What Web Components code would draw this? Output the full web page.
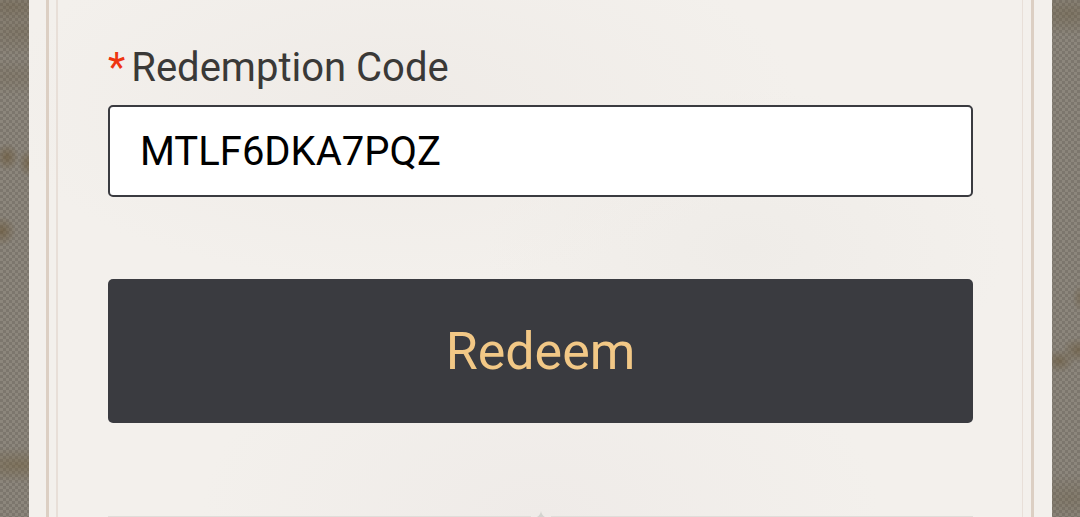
<!DOCTYPE html>
<html lang="en">
<head>
<meta charset="utf-8">
<meta name="viewport" content="width=device-width, initial-scale=1">
<title>Redeem Code</title>
<style>
  :root {
    --font-family: Roboto, "Liberation Sans", sans-serif;
    --ink: #3a3b40;
    --gold: #f2c886;
    --danger: #ee3510;
    --paper: #f3f0ec;
    --radius: 5px;
  }

  body {
    margin: 0;
    font-family: var(--font-family);
    background: #847d73;
  }
</style>
</head>
<body>
<redeem-page>
  <redeem-panel>
    <redeem-form>
      <redeem-input name="code" value="MTLF6DKA7PQZ" required>Redemption Code</redeem-input>
      <redeem-button>Redeem</redeem-button>
    </redeem-form>
    <panel-divider></panel-divider>
  </redeem-panel>
</redeem-page>

<script>
class RedeemPage extends HTMLElement {
  constructor() {
    super();
    this.attachShadow({ mode: 'open' });
    this.shadowRoot.innerHTML = `
      <style>
        :host {
          display: flex;
          box-sizing: border-box;
          min-height: 100vh;
          padding: 0 28px 0 29px;
          overflow: hidden;
          background:
            radial-gradient(ellipse 12px 14px at 7px 157px, #66512f90, transparent),
            radial-gradient(ellipse 10px 14px at 28px 163px, #66512f80, transparent),
            radial-gradient(ellipse 14px 15px at 2px 231px, #66512f90, transparent),
            radial-gradient(ellipse 60px 16px at 12px 6px, #66563a60, transparent),
            radial-gradient(ellipse 60px 26px at 20px 32px, #66563a48, transparent),
            radial-gradient(ellipse 60px 20px at 14px 76px, #66563a38, transparent),
            radial-gradient(ellipse 60px 18px at 18px 465px, #6d5b3870, transparent),
            radial-gradient(ellipse 50px 22px at calc(100% - 12px) 14px, #66583c60, transparent),
            radial-gradient(ellipse 16px 12px at calc(100% - 21px) 361px, #66543588, transparent),
            radial-gradient(ellipse 16px 13px at calc(100% - 2px) 350px, #66543588, transparent),
            radial-gradient(ellipse 8px 14px at 100% 298px, #66543560, transparent),
            radial-gradient(ellipse 50px 24px at calc(100% - 10px) 498px, #66583c48, transparent),
            conic-gradient(#7c766d 25%, #8c867c 0 50%, #7c766d 0 75%, #8c867c 0) 0 0 / 6px 6px;
        }
      </style>
      <slot></slot>`;
  }
}

class RedeemPanel extends HTMLElement {
  constructor() {
    super();
    this.attachShadow({ mode: 'open' });
    this.shadowRoot.innerHTML = `
      <style>
        :host {
          display: flex;
          flex: 1;
          min-width: 0;
          box-sizing: border-box;
          padding: 0 18px 0 17px;
          background:
            radial-gradient(ellipse 340px 200px at 50% 100%, #efebe8, #efebe800),
            radial-gradient(ellipse 400px 180px at 36% 20%, #efebe7, #efebe700),
            radial-gradient(ellipse 260px 160px at 70% 48%, #efece8, #efece800),
            var(--paper);
        }

        .frame {
          display: flex;
          flex: 1;
          min-width: 0;
          padding: 0 8px 0 7px;
          border: solid #dccfc3;
          border-width: 0 3px;
        }

        .content {
          display: flex;
          flex: 1;
          flex-direction: column;
          min-width: 0;
          padding: 44px 49px 0 50px;
          border: solid #e8dfd8;
          border-width: 0 1px 0 2px;
        }
      </style>
      <div class="frame">
        <div class="content"><slot></slot></div>
      </div>`;
  }
}

class RedeemForm extends HTMLElement {
  constructor() {
    super();
    this.attachShadow({ mode: 'open' });
    this.shadowRoot.innerHTML = `
      <style>
        :host {
          display: flex;
          flex-direction: column;
          gap: 82px;
        }
      </style>
      <slot></slot>`;
  }
}

class RedeemInput extends HTMLElement {
  static formAssociated = true;

  constructor() {
    super();
    this.attachShadow({ mode: 'open' });
    this._internals = this.attachInternals();
    this.render();
  }

  connectedCallback() {
    this.input = this.shadowRoot.querySelector('input');

    ['name', 'value', 'placeholder', 'required'].forEach((attr) => {
      const value = this.getAttribute(attr);
      if (value !== null) {
        this.input.setAttribute(attr, value);
      }
    });

    this._internals.setFormValue(this.input.value);

    this.input.addEventListener('input', () => {
      this._internals.setFormValue(this.input.value);
    });
  }

  render() {
    this.shadowRoot.innerHTML = `
      <style>
        :host {
          display: flex;
          flex-direction: column;
          gap: 14px;
          font-size: 40px;
        }

        label {
          display: flex;
          gap: 6px;
          line-height: 47px;
          color: #3a3937;
        }

        .mark {
          display: none;
          color: var(--danger);
        }

        :host([required]) .mark {
          display: inline;
        }

        input {
          box-sizing: border-box;
          width: 100%;
          height: 92px;
          padding: 0 30px;
          border: 2px solid var(--ink);
          border-radius: var(--radius);
          background: #fff;
          color: #000;
          font: inherit;
        }

        input:focus-visible {
          outline: 2px solid var(--gold);
        }
      </style>
      <label for="field"><span class="mark">*</span><span><slot></slot></span></label>
      <input id="field" type="text" autocomplete="off" spellcheck="false">`;
  }

  get value() {
    return this.input?.value || '';
  }
}

class RedeemButton extends HTMLElement {
  constructor() {
    super();
    this.attachShadow({ mode: 'open' });
    this.shadowRoot.innerHTML = `
      <style>
        :host {
          display: block;
        }

        button {
          display: block;
          width: 100%;
          padding: 43px 24px 41px;
          border: 0;
          border-radius: var(--radius);
          background: var(--ink);
          color: var(--gold);
          font-family: inherit;
          font-size: 52px;
          line-height: 60px;
          cursor: pointer;
        }
      </style>
      <button type="button"><slot></slot></button>`;
  }
}

class PanelDivider extends HTMLElement {
  constructor() {
    super();
    this.attachShadow({ mode: 'open' });
    this.shadowRoot.innerHTML = `
      <style>
        :host {
          display: flex;
          align-items: flex-end;
          gap: 6px;
          height: 6px;
          margin-top: 88px;
        }

        .line {
          flex: 1;
          height: 1px;
          background: #e0ddd9;
        }
      </style>
      <span class="line"></span>
      <svg width="8" height="6" viewBox="0 0 8 6" aria-hidden="true">
        <path d="M4 0Q4.6 4 8 6H0Q3.4 4 4 0z" fill="#d3d3cf"/>
      </svg>
      <span class="line"></span>`;
  }
}

customElements.define('redeem-page', RedeemPage);
customElements.define('redeem-panel', RedeemPanel);
customElements.define('redeem-form', RedeemForm);
customElements.define('redeem-input', RedeemInput);
customElements.define('redeem-button', RedeemButton);
customElements.define('panel-divider', PanelDivider);
</script>
</body>
</html>
